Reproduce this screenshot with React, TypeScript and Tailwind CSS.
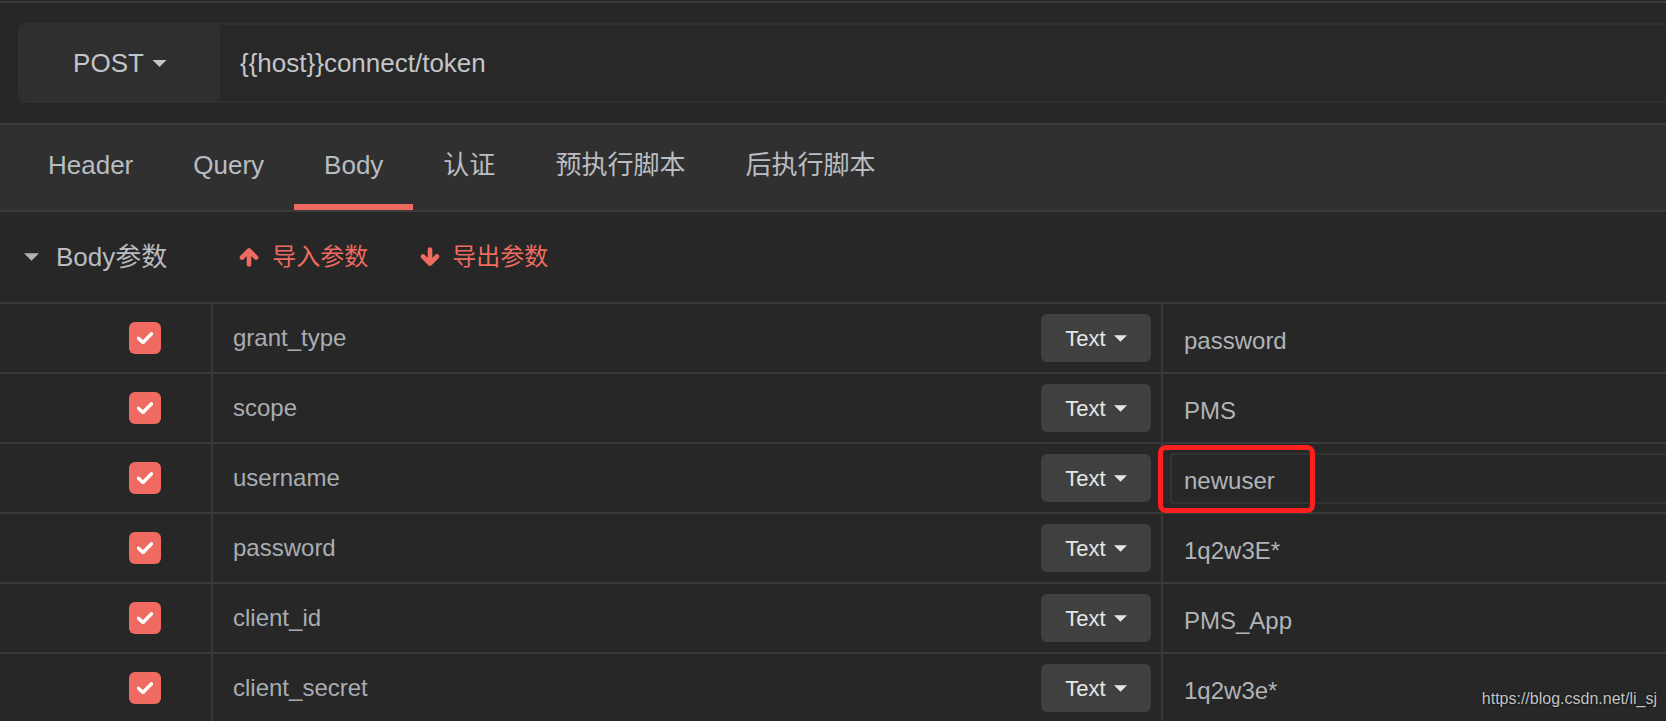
const rows = [
  { key: "grant_type", value: "password" },
  { key: "scope", value: "PMS" },
  { key: "username", value: "newuser", active: true },
  { key: "password", value: "1q2w3E*" },
  { key: "client_id", value: "PMS_App" },
  { key: "client_secret", value: "1q2w3e*" },
];

const tabs = ["Header", "Query", "Body", "认证", "预执行脚本", "后执行脚本"];

const Caret = ({ className }: { className?: string }) => (
  <svg viewBox="0 0 14 7" className={className}>
    <path d="M0 0h14L7 7z" fill="currentColor" />
  </svg>
);

const Check = () => (
  <svg viewBox="0 0 16 12" className="w-[16px] h-[12px] shrink-0">
    <path d="M1.5 6.2 L6 10.5 L14.5 1.8" fill="none" stroke="white" strokeWidth="3.4" strokeLinecap="round" strokeLinejoin="round" />
  </svg>
);

// chunky arrows like the font icon in the app
const ArrowUp = ({ className }: { className?: string }) => (
  <svg viewBox="0 0 20 20" className={className}>
    <path d="M10 17.5V4.5 M3 10.5 L10 3.5 L17 10.5" fill="none" stroke="currentColor" strokeWidth="4.6" strokeLinecap="round" strokeLinejoin="round" />
  </svg>
);

const ArrowDown = ({ className }: { className?: string }) => (
  <svg viewBox="0 0 20 20" className={className}>
    <path d="M10 2.5V15.5 M3 9.5 L10 16.5 L17 9.5" fill="none" stroke="currentColor" strokeWidth="4.6" strokeLinecap="round" strokeLinejoin="round" />
  </svg>
);

const App = () => {
  return (
    <div className="relative w-[1666px] h-[721px] overflow-hidden bg-[#272727] font-['Liberation_Sans','Noto_Sans_CJK_SC',sans-serif]">
      <div className="h-[3px] border-b-2 border-[#3b3b3b]" />

      {/* request line */}
      <div className="pt-[20px] pb-[20px] pl-[18px]">
        <div className="flex h-[80px] rounded-l-[8px] border-2 border-r-0 border-[#303030] overflow-hidden">
          <div className="w-[200px] bg-[#2f2f2f] flex items-center justify-center gap-[8px] text-[#c2c6ca]">
            <span className="text-[26px]">POST</span>
            <Caret className="w-[15px] h-[7px]" />
          </div>
          <div className="flex-1 bg-[#282828] flex items-center pl-[20px] text-[26px] text-[#c2c6ca]">
            {"{{host}}connect/token"}
          </div>
        </div>
      </div>

      {/* tabs */}
      <div className="h-[89px] bg-[#303030] border-y-2 border-[#3b3b3b] flex pl-[18px]">
        {tabs.map((t) => (
          <div key={t} className="relative h-full px-[30px] flex items-center pb-[4px] text-[26px] text-[#b9bdc2]">
            {t}
            {t === "Body" && <div className="absolute left-0 right-0 bottom-0 h-[6px] bg-[#ee6a5e]" />}
          </div>
        ))}
      </div>

      {/* body params header */}
      <div className="h-[90px] flex items-center pl-[24px]">
        <Caret className="w-[15px] h-[8px] text-[#b0b4b8]" />
        <span className="ml-[17px] text-[26px] text-[#b9bdc2]">Body参数</span>
        <ArrowUp className="ml-[72px] w-[20px] h-[20px] shrink-0 text-[#f06b5f]" />
        <span className="ml-[13px] text-[24px] text-[#f06b5f]">导入参数</span>
        <ArrowDown className="ml-[52px] w-[20px] h-[20px] shrink-0 text-[#f06b5f]" />
        <span className="ml-[12px] text-[24px] text-[#f06b5f]">导出参数</span>
      </div>

      {/* params table */}
      <div className="border-t-2 border-[#393939]">
        {rows.map((r) => (
          <div key={r.key} className="flex h-[70px] border-b-2 border-[#393939]">
            <div className="w-[213px] border-r-2 border-[#393939] flex items-center pl-[129px]">
              <div className="w-[32px] h-[32px] rounded-[6px] bg-[#ef6b61] flex items-center justify-center">
                <Check />
              </div>
            </div>
            <div className="w-[950px] border-r-2 border-[#393939] flex items-center justify-between pl-[20px] pr-[10px]">
              <span className="text-[24px] text-[#a9adb2]">{r.key}</span>
              <div className="w-[110px] h-[48px] rounded-[6px] bg-[#404040] flex items-center justify-center gap-[8px] text-[#e6e6e6]">
                <span className="text-[22px]">Text</span>
                <Caret className="w-[13px] h-[7px]" />
              </div>
            </div>
            <div className="relative flex-1 flex items-center pl-[7px]">
              <div
                className={`flex-1 h-[51px] flex items-center pl-[12px] pt-[6px] rounded-l-[4px] border-2 border-r-0 ${
                  r.active ? "border-[#333333]" : "border-transparent"
                } text-[24px] text-[#b0b4b8]`}
              >
                {r.value}
              </div>
              {r.active && (
                <div className="absolute left-[-5px] top-[1px] w-[157px] h-[68px] rounded-[8px] border-[5px] border-[#ff1f1f]" />
              )}
            </div>
          </div>
        ))}
      </div>

      <div className="absolute right-[9px] bottom-[10px] text-[16px] text-[#c4c4c4] [text-shadow:0_0_2px_#000]">
        https://blog.csdn.net/li_sj
      </div>
    </div>
  );
};

export default App;
